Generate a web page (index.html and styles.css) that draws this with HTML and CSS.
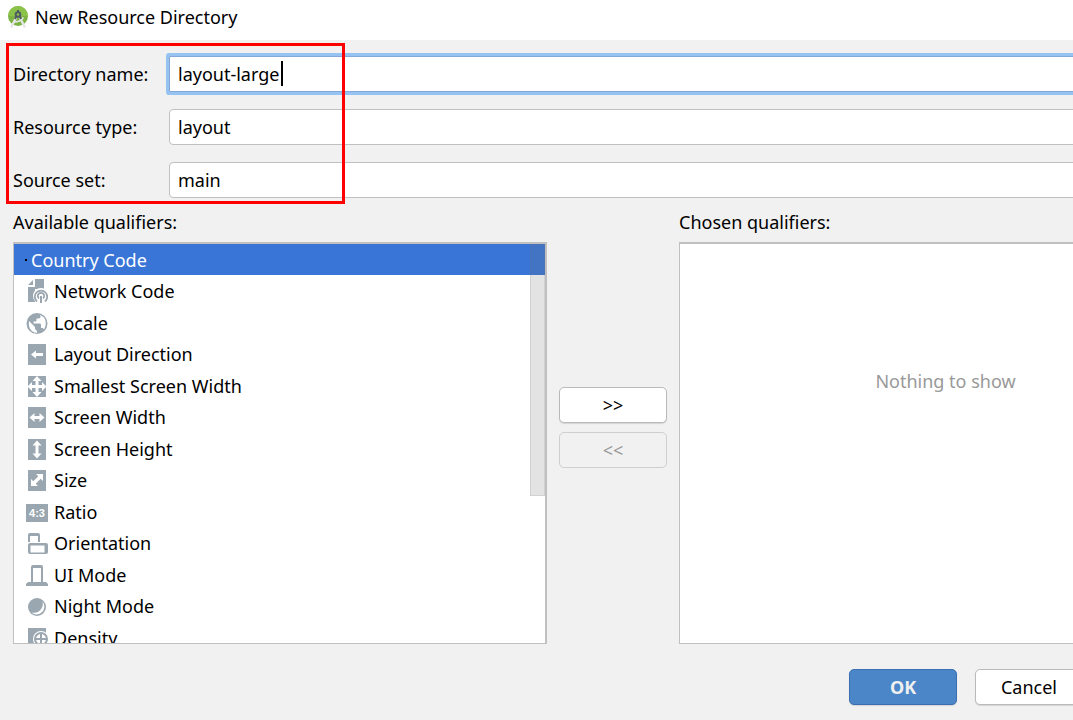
FILE: index.html
```html
<!DOCTYPE html>
<html lang="en">
<head>
    <meta charset="UTF-8">
    <meta name="viewport" content="width=device-width, initial-scale=1.0">
    <title>New Resource Directory</title>
    <link rel="stylesheet" href="styles.css">
</head>
<body>
    <div class="dialog">
        <header class="title-bar">
            <svg class="logo" viewBox="0 0 22 24">
                <circle cx="11" cy="11" r="10" fill="#7cb342"/>
                <path d="M1 11a10 10 0 0 1 20 0z" fill="#8bc34a"/>
                <path d="M9.500 12L4 22.500M12.500 12l5.500 10.500" stroke="#e6e6e6" stroke-width="2.400" fill="none"/>
                <path d="M7 16.500q5 1.500 9.500-4" stroke="#e6e6e6" stroke-width="1.600" fill="none"/>
                <path d="M11 5v3M9.500 11l-1.500 3M12.500 11l1.500 3" stroke="#4f5b62" stroke-width="2"/>
                <circle cx="11" cy="9.500" r="2.300" fill="#8bc34a" stroke="#4f5b62" stroke-width="2"/>
            </svg>
            <h1>New Resource Directory</h1>
        </header>

        <form class="content">
            <div class="fields">
                <label for="dirName">Directory name:</label>
                <div class="field focused">
                    <input type="text" id="dirName" name="dirName" value="layout-large">
                    <span class="caret"></span>
                </div>

                <label for="resType">Resource type:</label>
                <div class="field">
                    <select id="resType" name="resType">
                        <option selected>layout</option>
                    </select>
                </div>

                <label for="sourceSet">Source set:</label>
                <div class="field">
                    <select id="sourceSet" name="sourceSet">
                        <option selected>main</option>
                    </select>
                </div>
                <div class="highlight"></div>
            </div>

            <div class="qualifiers">
                <section class="panel">
                    <h2>Available qualifiers:</h2>
                    <div class="list-box">
                        <ul class="list">
                            <li class="selected"><span class="dot"></span>Country Code</li>
                            <li>
                                <svg class="icon" viewBox="0 0 22 24">
                                    <path d="M9 0h9v10H9v13H2V8h7zM7 1v5H2z"/>
                                    <circle cx="15" cy="17" r="8" fill="#fff"/>
                                    <path d="M11 22.500a6.200 6.200 0 1 1 8 0M13 19.500a3.200 3.200 0 1 1 4 0" fill="none" stroke="#9aa7b0" stroke-width="1.800"/>
                                    <path d="M14 17h2v7h-2z"/>
                                </svg>
                                Network Code
                            </li>
                            <li>
                                <svg class="icon" viewBox="0 0 22 24">
                                    <circle cx="11" cy="12.500" r="10.500"/>
                                    <path d="M3 10l6 6v2l2 2v2C5 21.500 2 16.500 3 10zM14 4c3 1 5 3 5.500 6 .7 3 0 6-1.500 8.500-.4-1-1-1.500-2-1.500h-1v-3c0-1-.5-1.500-1.500-1.500h-6v-2h2c.7 0 1-.3 1-1v-2h2c1.500 0 2-1 2-2z" fill="#fff"/>
                                </svg>
                                Locale
                            </li>
                            <li>
                                <svg class="icon" viewBox="0 0 22 24">
                                    <path d="M2 2h18v21H2z"/>
                                    <path d="M5 12.500l5-4v2.500h7v3h-7v2.500z" fill="#fff"/>
                                </svg>
                                Layout Direction
                            </li>
                            <li>
                                <svg class="icon" viewBox="0 0 22 24">
                                    <path d="M2 2h18v21H2z"/>
                                    <path d="M11 2l4.500 5h-3v4H16V8l4.500 4.500L16 17v-3h-3.500v4h3L11 23l-4.500-5h3v-4H6v3l-4.500-4.500L6 8v3h3.500V7h-3z" fill="#fff"/>
                                </svg>
                                Smallest Screen Width
                            </li>
                            <li>
                                <svg class="icon" viewBox="0 0 22 24">
                                    <path d="M2 2h18v21H2z"/>
                                    <path d="M3.500 12.500l5-4.500v3h5V8l5 4.500-5 4.500v-3h-5v3z" fill="#fff"/>
                                </svg>
                                Screen Width
                            </li>
                            <li>
                                <svg class="icon" viewBox="0 0 22 24">
                                    <path d="M2 2h18v21H2z"/>
                                    <path d="M11 3.500l4.500 5h-3v8h3l-4.500 5-4.500-5h3v-8h-3z" fill="#fff"/>
                                </svg>
                                Screen Height
                            </li>
                            <li>
                                <svg class="icon" viewBox="0 0 22 24">
                                    <path d="M2 2h18v21H2z"/>
                                    <path d="M10 6h7v7l-2.300-2.300-5 5L12 18H5v-7l2.300 2.300 5-5z" fill="#fff"/>
                                </svg>
                                Size
                            </li>
                            <li>
                                <svg class="icon" viewBox="0 0 22 24">
                                    <path d="M0 4h22v18H0z"/>
                                    <text x="11" y="17" text-anchor="middle" class="icon-text">4:3</text>
                                </svg>
                                Ratio
                            </li>
                            <li>
                                <svg class="icon" viewBox="0 0 22 24">
                                    <path d="M2 4q0-2 2-2h8q2 0 2 2v7h-2V5H4v6H2z"/>
                                    <path d="M4 12h16q2 0 2 2v7q0 2-2 2H4q-2 0-2-2v-7q0-2 2-2zM4.500 14.500v7h14v-7z" fill-rule="evenodd"/>
                                </svg>
                                Orientation
                            </li>
                            <li>
                                <svg class="icon" viewBox="0 0 22 24">
                                    <path d="M5 4q0-2 2-2h8q2 0 2 2v15h3l2 2v2H0v-2l2-2h3zM7 5v14h8V5z" fill-rule="evenodd"/>
                                </svg>
                                UI Mode
                            </li>
                            <li>
                                <svg class="icon" viewBox="0 0 22 24">
                                    <circle cx="11" cy="13" r="9"/>
                                    <path d="M16.500 7.500A7.800 7.800 0 0 1 5.500 18.500A9 9 0 0 0 16.500 7.500z" fill="#fff"/>
                                </svg>
                                Night Mode
                            </li>
                            <li>
                                <svg class="icon" viewBox="0 0 22 24">
                                    <path d="M2 2h18v6H2zM2 2h9v21H2z"/>
                                    <circle cx="15" cy="13" r="8" fill="#fff"/>
                                    <circle cx="15" cy="13" r="6" fill="none" stroke="#9aa7b0" stroke-width="2"/>
                                    <path d="M14 8h2v4h4v2h-4v5h-2v-5h-4v-2h4z"/>
                                </svg>
                                Density
                            </li>
                        </ul>
                        <span class="scroll-thumb"></span>
                    </div>
                </section>

                <div class="move-buttons">
                    <button type="button">&gt;&gt;</button>
                    <button type="button" disabled>&lt;&lt;</button>
                </div>

                <section class="panel">
                    <h2>Chosen qualifiers:</h2>
                    <div class="list-box empty">
                        <p>Nothing to show</p>
                    </div>
                </section>
            </div>

            <footer class="actions">
                <button type="submit" class="primary">OK</button>
                <button type="button">Cancel</button>
            </footer>
        </form>
    </div>
</body>
</html>
```
FILE: styles.css
```css
* {
    margin: 0;
    padding: 0;
    box-sizing: border-box;
}

body {
    background-color: #f1f1f1;
    font-family: "Noto Sans", "Open Sans", sans-serif;
    font-size: 18px;
    line-height: 24px;
    color: #000;
    overflow: hidden;
}

/* the dialog is wider than the window and runs off its right edge */
.dialog {
    width: calc(100vw + 153px);
    min-height: 100vh;
}

.title-bar {
    display: flex;
    align-items: center;
    gap: 6px;
    height: 40px;
    padding: 0 7px 6px;
    background-color: #fff;
}

.logo {
    width: 22px;
    height: 24px;
}

h1, h2 {
    font-size: 18px;
    font-weight: normal;
}

.content {
    padding: 16px 13px 0;
}

.fields {
    position: relative;
    display: grid;
    grid-template-columns: 156px 1fr;
    row-gap: 17px;
    align-items: center;
}

.field {
    position: relative;
    height: 36px;
}

input, select {
    width: 100%;
    height: 36px;
    padding: 0 8px;
    border: 1px solid #c0c0c0;
    border-radius: 4px;
    background-color: #fff;
    font: inherit;
    color: #000;
    appearance: none;
    outline: none;
}

.focused input {
    border-color: #84a9d8;
    border-radius: 1px;
    box-shadow: 0 0 0 3px #97c3f3;
}

.caret {
    position: absolute;
    left: 112px;
    top: 5px;
    width: 2px;
    height: 25px;
    background-color: #000;
}

.highlight {
    position: absolute;
    left: -7px;
    top: -13px;
    width: 339px;
    height: 161px;
    border: 3px solid #f00;
    pointer-events: none;
}

.qualifiers {
    display: grid;
    grid-template-columns: 1fr 132px 1fr;
    margin-top: 12px;
}

h2 {
    height: 32px;
}

.list-box {
    position: relative;
    height: 402px;
    border: 1px solid #c0c0c0;
    border-width: 2px 2px 1px 1px;
    background-color: #fff;
    overflow: hidden;
}

.list {
    list-style: none;
}

.list li {
    display: flex;
    align-items: center;
    gap: 6px;
    height: 31px;
    padding-left: 12px;
}

.list li:nth-child(even) {
    height: 32px;
}

.list li.selected {
    gap: 4px;
    padding-left: 11px;
    background-color: #3875d7;
    color: #fff;
}

.dot {
    width: 2px;
    height: 2px;
    background-color: #000;
}

.icon {
    width: 22px;
    height: 24px;
    fill: #9aa7b0;
}

.icon-text {
    font-family: "Liberation Sans", sans-serif;
    font-size: 11px;
    font-weight: bold;
    fill: #fff;
}

.scroll-thumb {
    position: absolute;
    right: 0;
    top: 0;
    width: 15px;
    height: 252px;
    border: 1px solid rgba(115, 115, 115, 0.15);
    background-color: rgba(115, 115, 115, 0.2);
}

.empty p {
    margin-top: 125px;
    text-align: center;
    color: #999;
}

.move-buttons {
    display: flex;
    flex-direction: column;
    justify-content: center;
    align-items: center;
    gap: 9px;
}

button {
    width: 108px;
    height: 36px;
    border: 1px solid #bababa;
    border-radius: 5px;
    background-color: #fff;
    box-shadow: 0 1px 1px rgba(0, 0, 0, 0.12);
    font: inherit;
    color: #000;
}

button:disabled {
    border-color: #cfcfcf;
    background-color: #f1f1f1;
    box-shadow: none;
    color: #999;
}

.actions {
    display: flex;
    justify-content: flex-end;
    gap: 18px;
    margin-top: 25px;
    padding-right: 130px;
}

button.primary {
    border-color: #3a70b2;
    background-color: #4a86c8;
    font-weight: bold;
    color: #f0f0f0;
}
```
